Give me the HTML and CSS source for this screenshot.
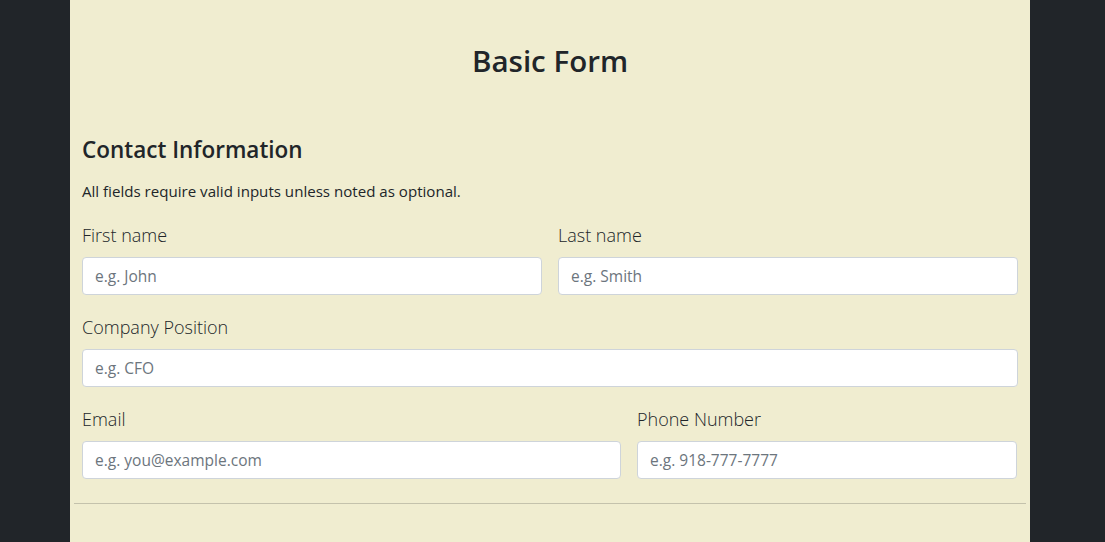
FILE: index.html
```html
<!DOCTYPE html>
<html lang="en">
<head>
<meta charset="utf-8">
<title>Basic Form</title>
<link rel="stylesheet" href="styles.css">
</head>
<body>
<main class="page">
  <h1 class="title">Basic Form</h1>
  <form class="form">
    <h2 class="section-title">Contact Information</h2>
    <p class="note">All fields require valid inputs unless noted as optional.</p>
    <div class="row">
      <div class="field half">
        <label class="label" for="first">First name</label>
        <input class="input" id="first" type="text" placeholder="e.g. John">
      </div>
      <div class="field half">
        <label class="label" for="last">Last name</label>
        <input class="input" id="last" type="text" placeholder="e.g. Smith">
      </div>
    </div>
    <div class="row">
      <div class="field full">
        <label class="label" for="pos">Company Position</label>
        <input class="input" id="pos" type="text" placeholder="e.g. CFO">
      </div>
    </div>
    <div class="row">
      <div class="field seven">
        <label class="label" for="email">Email</label>
        <input class="input" id="email" type="email" placeholder="e.g. you@example.com">
      </div>
      <div class="field five">
        <label class="label" for="phone">Phone Number</label>
        <input class="input" id="phone" type="tel" placeholder="e.g. 918-777-7777">
      </div>
    </div>
    <hr class="divider">
  </form>
</main>
</body>
</html>
```
FILE: styles.css
```css
html, body {
  margin: 0;
  padding: 0;
}
body {
  background: #212529;
  font-family: "Open Sans", "Noto Sans", sans-serif;
  color: #212529;
  padding-right: 5px;
}
.page {
  width: 960px;
  margin: 0 auto;
  min-height: 100vh;
  background: #f0edd0;
  box-sizing: border-box;
  padding-top: 42px;
}
.title {
  margin: 0;
  text-align: center;
  font-size: 29.5px;
  line-height: 38px;
  font-weight: 600;
}
.form {
  padding: 55px 12px 0;
}
.section-title {
  margin: 0;
  font-size: 22.5px;
  line-height: 29px;
  font-weight: 600;
}
.note {
  margin: 15px 0 0;
  font-size: 15.1px;
  line-height: 24px;
}
.row {
  display: flex;
  gap: 16px;
  margin-top: 20px;
}
.field {
  display: flex;
  flex-direction: column;
}
.half { width: 460px; }
.full { width: 936px; }
.seven { width: 539px; }
.five { width: 380px; }
.label {
  font-size: 18px;
  line-height: 24px;
  font-weight: 300;
  color: #212529;
  margin-bottom: 10px;
}
.input {
  box-sizing: border-box;
  height: 38px;
  width: 100%;
  border: 1px solid #ced4da;
  border-radius: 4px;
  background: #fff;
  padding: 0 12px;
  font-family: inherit;
  font-size: 15.5px;
  color: #495057;
}
.input::placeholder {
  color: #6c757d;
}
.divider {
  margin: 24px -8px 0;
  border: 0;
  border-top: 1px solid #c4c2ac;
}
```
